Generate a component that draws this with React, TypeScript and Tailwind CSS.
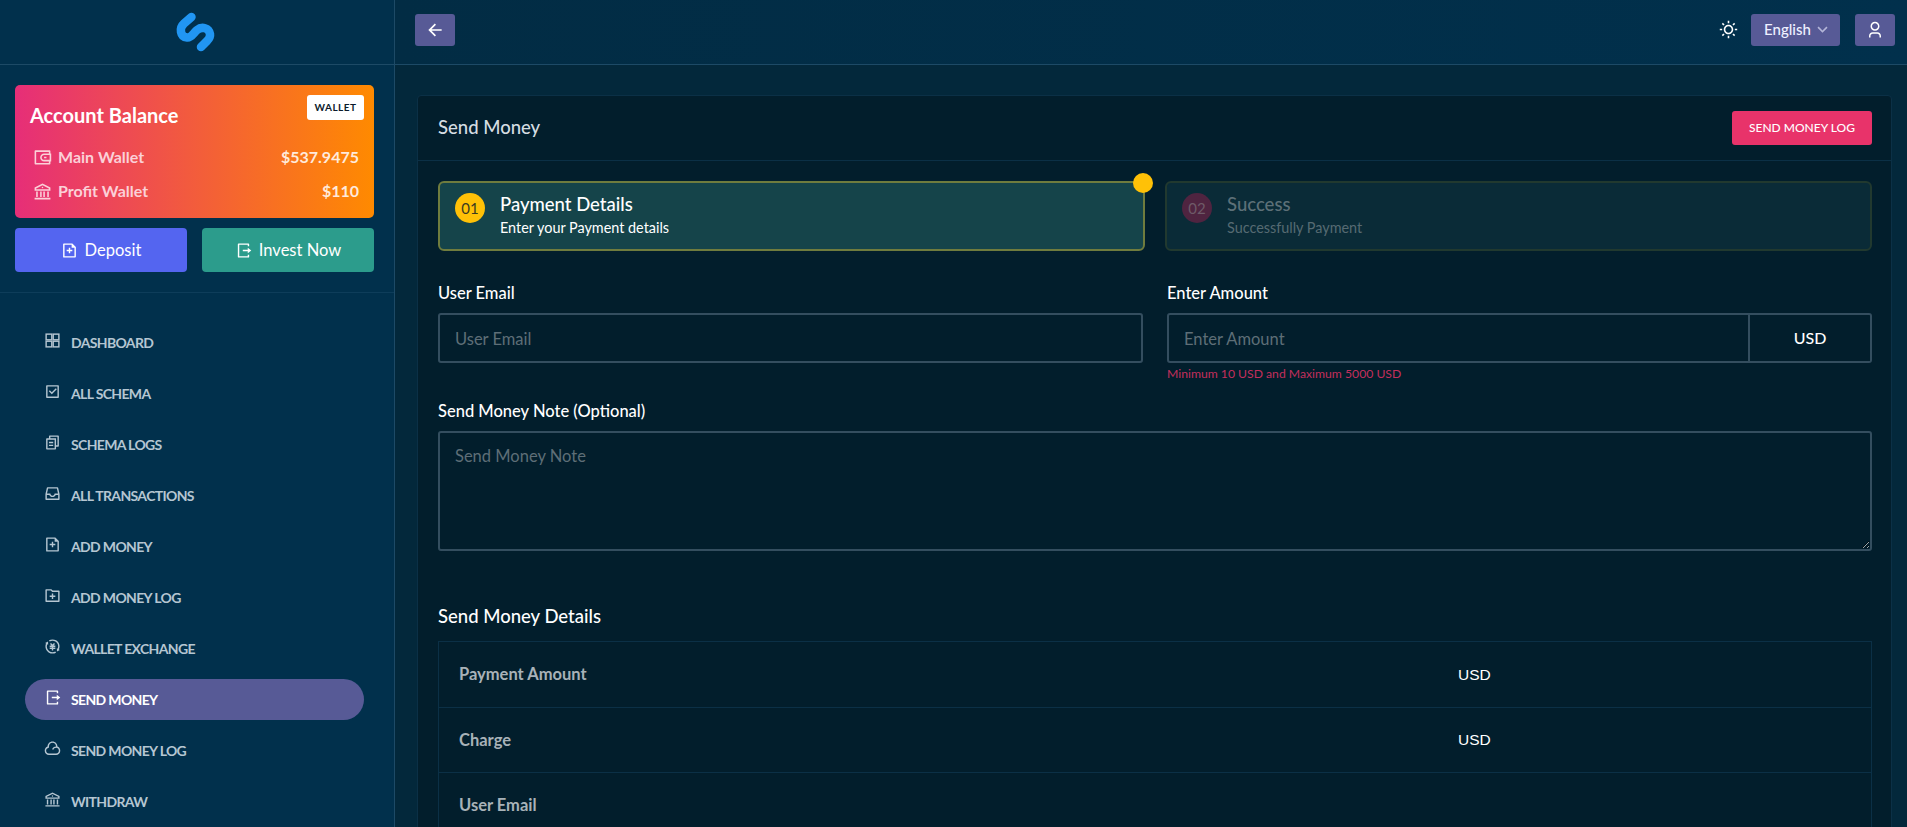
import type { SVGProps } from "react";
import {
  RiArrowDownSLine,
  RiArrowLeftLine,
  RiBankLine,
  RiCheckboxLine,
  RiCloudLine,
  RiExchangeCnyLine,
  RiFileAddLine,
  RiFileCopy2Line,
  RiFolderAddLine,
  RiInbox2Line,
  RiLogoutBoxRLine,
  RiSunLine,
  RiUser3Line,
  RiWallet3Line,
} from "react-icons/ri";

const GridIcon = (props: SVGProps<SVGSVGElement>) => (
  <svg viewBox="0 0 24 24" fill="none" stroke="currentColor" strokeWidth="2" {...props}>
    <rect x="3" y="3" width="8" height="8" />
    <rect x="13" y="3" width="8" height="8" />
    <rect x="3" y="13" width="8" height="8" />
    <rect x="13" y="13" width="8" height="8" />
  </svg>
);

const navItems = [
  { label: "DASHBOARD", icon: GridIcon },
  { label: "ALL SCHEMA", icon: RiCheckboxLine },
  { label: "SCHEMA LOGS", icon: RiFileCopy2Line },
  { label: "ALL TRANSACTIONS", icon: RiInbox2Line },
  { label: "ADD MONEY", icon: RiFileAddLine },
  { label: "ADD MONEY LOG", icon: RiFolderAddLine },
  { label: "WALLET EXCHANGE", icon: RiExchangeCnyLine },
  { label: "SEND MONEY", icon: RiLogoutBoxRLine, active: true },
  { label: "SEND MONEY LOG", icon: RiCloudLine },
  { label: "WITHDRAW", icon: RiBankLine },
];

const details = [
  { label: "Payment Amount", value: "USD" },
  { label: "Charge", value: "USD" },
  { label: "User Email", value: "" },
];

const Logo = () => (
  <svg viewBox="1 0 60 50" className="h-[50px] w-[60px]" fill="none">
    <path
      d="M25.5 10 L18 16.5 C13 21 14 30 21 30.5 C25 31 27 27 30 24 L31 23 C36 19 43 21 44 27 C44.5 30 43 32 41 34 L35 40"
      stroke="#2196f3"
      strokeWidth="8.5"
      strokeLinecap="round"
      strokeLinejoin="round"
    />
  </svg>
);

const Sidebar = () => (
  <aside className="flex h-full w-[395px] shrink-0 flex-col overflow-hidden border-r border-[#1d4a66] bg-[#01304c]">
    <div className="flex h-[65px] shrink-0 items-center justify-center border-b border-[#1d4a66]">
      <Logo />
    </div>

    <div className="shrink-0 border-b border-[#0e3d5a] pb-[20px] pl-[15px] pr-[20px] pt-[20px]">
      {/* Balance card */}
      <div className="relative h-[133px] rounded-[5px] bg-linear-to-r/srgb from-[#e62e78] to-[#ff8a00] px-[15px] pt-[20px]">
        <span className="absolute right-[10px] top-[10px] flex h-[25px] w-[57px] items-center justify-center rounded-[3px] bg-white text-[10px] font-bold tracking-[0.5px] text-[#0b1a2b]">
          WALLET
        </span>
        <h3 className="text-[20px] font-bold leading-[20px] text-white">Account Balance</h3>
        <div className="mt-[22px] flex h-[20px] items-center justify-between pl-[3px]">
          <span className="flex items-center gap-[6px] text-[16px] font-bold text-[#fbd0d8]">
            <RiWallet3Line className="h-[19px] w-[19px]" />
            Main Wallet
          </span>
          <span className="text-[16px] font-bold text-[#ffeadb]">$537.9475</span>
        </div>
        <div className="mt-[14px] flex h-[20px] items-center justify-between pl-[3px]">
          <span className="flex items-center gap-[6px] text-[16px] font-bold text-[#fbd0d8]">
            <RiBankLine className="h-[19px] w-[19px]" />
            Profit Wallet
          </span>
          <span className="text-[16px] font-bold text-[#ffeadb]">$110</span>
        </div>
      </div>

      <div className="mt-[10px] grid grid-cols-2 gap-[15px]">
        <button className="flex h-[44px] items-center justify-center gap-[7px] rounded-[4px] bg-[#5465f0] text-[16.5px] text-white">
          <RiFileAddLine className="h-[17px] w-[17px]" />
          Deposit
        </button>
        <button className="flex h-[44px] items-center justify-center gap-[7px] rounded-[4px] bg-[#2c9c8c] text-[16.5px] text-white">
          <RiLogoutBoxRLine className="h-[17px] w-[17px]" />
          Invest Now
        </button>
      </div>
    </div>

    <nav className="flex flex-col gap-[10px] pl-[25px] pr-[30px] pt-[29px]">
      {navItems.map((item) => (
        <a
          key={item.label}
          className={`flex h-[41px] shrink-0 items-center gap-[10px] rounded-full pl-[19px] pr-[20px] text-[14px] font-bold tracking-[-0.65px] ${
            item.active ? "bg-[#575a96] text-white" : "text-[#b5c6d2]"
          }`}
        >
          <item.icon className="h-[17px] w-[17px] -translate-y-[2px]" />
          {item.label}
        </a>
      ))}
    </nav>
  </aside>
);

const Topbar = () => (
  <header className="flex h-[65px] shrink-0 items-center justify-between border-b border-[#1d4a66] bg-linear-to-r/srgb from-[#022c44] to-[#01304c] pb-[5px] pl-[20px] pr-[12px]">
    <button className="flex h-[32px] w-[40px] items-center justify-center rounded-[3px] bg-[#575a96] text-white">
      <RiArrowLeftLine className="h-[20px] w-[20px]" />
    </button>
    <div className="flex items-center">
      <RiSunLine className="h-[19px] w-[19px] text-white" />
      <button className="ml-[13px] flex h-[32px] w-[89px] items-center justify-center gap-[2px] rounded-[3px] bg-[#575a96] pl-[5px] text-[15px] font-medium text-[#eef0ff]">
        English
        <RiArrowDownSLine className="h-[19px] w-[19px] text-[#b4b6d8]" />
      </button>
      <button className="ml-[15px] flex h-[32px] w-[40px] items-center justify-center rounded-[3px] bg-[#575a96] text-white">
        <RiUser3Line className="h-[18px] w-[18px]" />
      </button>
    </div>
  </header>
);

const Step = ({
  num,
  title,
  sub,
  active,
}: {
  num: string;
  title: string;
  sub: string;
  active?: boolean;
}) => (
  <div
    className={`relative flex h-[70px] items-start gap-[15px] rounded-[6px] border-2 pl-[15px] pt-[10px] ${
      active ? "border-[#6f7c3e] bg-[#15444a]" : "border-[#21392f] bg-[#0a2b37]"
    }`}
  >
    <span
      className={`flex h-[30px] w-[30px] shrink-0 items-center justify-center rounded-full text-[15px] ${
        active ? "bg-[#ffc107] text-[#3b3a20]" : "bg-[#4f2440] text-[#6e5a68]"
      }`}
    >
      {num}
    </span>
    <div className="-mt-[1px]">
      <p
        className={`text-[18.5px] font-medium leading-[24px] ${active ? "text-white" : "text-[#5d7078]"}`}
      >
        {title}
      </p>
      <p className={`mt-[3px] text-[14.4px] leading-[18px] ${active ? "text-white" : "text-[#566a72]"}`}>
        {sub}
      </p>
    </div>
    {active && (
      <span className="absolute -right-[10px] -top-[10px] h-[20px] w-[20px] rounded-full bg-[#ffc107]" />
    )}
  </div>
);

const fieldClass =
  "h-[50px] rounded-[3px] border-2 border-[#344e5f] bg-transparent px-[15px] text-[16.5px] text-white outline-none placeholder:text-[#5e6e77]";

export default function App() {
  return (
    <div className="flex h-screen w-full overflow-hidden bg-[#03283b] font-['Lato',sans-serif]">
      <Sidebar />
      <div className="flex h-full min-w-0 flex-1 flex-col overflow-hidden">
        <Topbar />
        <main className="min-h-0 flex-1 overflow-hidden pl-[22px] pr-[15px] pt-[30px]">
          <section className="rounded-[4px] border border-[#0b3046] bg-[#021e2c]">
            <div className="flex h-[65px] items-center justify-between border-b border-[#0b3046] pl-[20px] pr-[19px]">
              <h2 className="text-[18.5px] font-medium text-[#d5dde2]">Send Money</h2>
              <button className="flex h-[34px] w-[140px] items-center justify-center rounded-[3px] bg-[#e8336a] text-[12px] font-medium text-white">
                SEND MONEY LOG
              </button>
            </div>

            <div className="pl-[20px] pr-[19px] pt-[20px]">
              <div className="grid grid-cols-2 gap-[20px]">
                <Step num="01" title="Payment Details" sub="Enter your Payment details" active />
                <Step num="02" title="Success" sub="Successfully Payment" />
              </div>

              <div className="mt-[32px] grid grid-cols-2 gap-[24px]">
                <div>
                  <label className="mb-[10px] block text-[16.5px] font-medium leading-[20px] text-white">
                    User Email
                  </label>
                  <input placeholder="User Email" className={`${fieldClass} w-full pt-[2px]`} />
                </div>
                <div>
                  <label className="mb-[10px] block text-[16.5px] font-medium leading-[20px] text-white">
                    Enter Amount
                  </label>
                  <div className="flex">
                    <input
                      placeholder="Enter Amount"
                      className={`${fieldClass} min-w-0 flex-1 rounded-r-none pt-[2px]`}
                    />
                    <span className="flex h-[50px] w-[122px] shrink-0 items-center justify-center rounded-r-[3px] border-2 border-l-0 border-[#344e5f] text-[16px] font-medium text-white">
                      USD
                    </span>
                  </div>
                  <p className="mt-[3px] text-[12.2px] leading-[16px] text-[#c22f5c]">
                    Minimum 10 USD and Maximum 5000 USD
                  </p>
                </div>
              </div>

              <label className="mb-[10px] mt-[19px] block text-[16.5px] font-medium leading-[20px] text-white">
                Send Money Note (Optional)
              </label>
              <textarea
                placeholder="Send Money Note"
                className={`${fieldClass} block h-[120px] w-full py-[11px]`}
              />

              <h3 className="mt-[53px] text-[18.5px] font-medium leading-[24px] text-white">
                Send Money Details
              </h3>
              <div className="mt-[13px] border border-[#0b3046]">
                {details.map((row, i) => (
                  <div
                    key={row.label}
                    className={`flex h-[65px] items-center pl-[20px] ${i > 0 ? "border-t border-[#0b3046]" : ""}`}
                  >
                    <span className="w-[999px] shrink-0 text-[16.5px] font-bold text-[#a8b2b8]">
                      {row.label}
                    </span>
                    <span className="font-['Liberation_Sans',sans-serif] text-[15.5px] text-white">
                      {row.value}
                    </span>
                  </div>
                ))}
              </div>
            </div>
          </section>
        </main>
      </div>
    </div>
  );
}
